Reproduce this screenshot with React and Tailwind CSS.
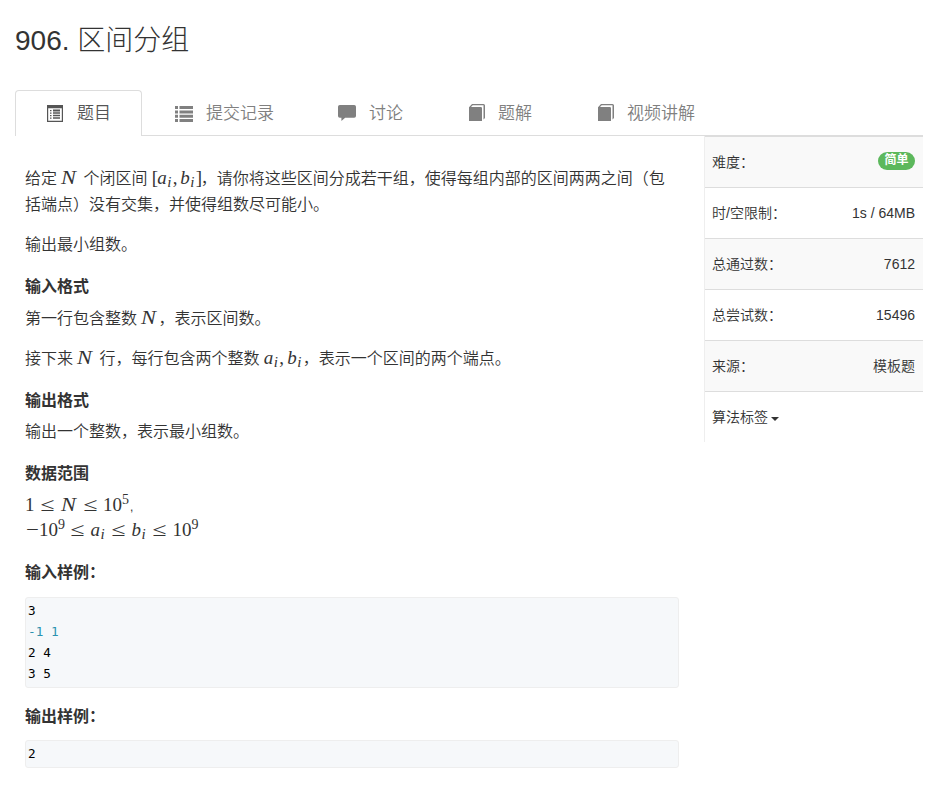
import React from 'react';

const ListAltIcon = () => (
  <svg className="-mt-px" width="16" height="17" viewBox="0 0 16 17" fill="currentColor">
    <path fillRule="evenodd" d="M0 0h16v17H0zM1.200 3.200v12.600h13.600V3.200z" />
    <path d="M3 5h1.500v1.200H3zM6 4.500h7v2H6zM3 7.600h1.500v1.200H3zM6 7.300h7v1.500H6zM3 10h1.500v1.200H3zM6 9.800h7v1.500H6zM3 12.600h1.500v1.200H3zM6 12.300h7v1.500H6z" />
  </svg>
);

const ListIcon = () => (
  <svg className="mt-[3px]" width="18" height="16" viewBox="0 0 18 16" fill="currentColor">
    <path d="M0 0h3v3H0zM4.5 0H18v3H4.5zM0 4.4h3v3H0zM4.5 4.4H18v3H4.5zM0 8.7h3v3H0zM4.5 8.7H18v3H4.5zM0 13h3v3H0zM4.5 13H18v3H4.5z" />
  </svg>
);

const CommentIcon = () => (
  <svg className="mt-px" width="18" height="16" viewBox="0 0 18 16" fill="currentColor">
    <path d="M1.8 0h14.4Q18 0 18 1.8v9.1q0 1.8-1.8 1.8H7.2L3.4 16v-3.3H1.8Q0 12.700 0 10.900V1.800Q0 0 1.800 0z" />
  </svg>
);

const BookIcon = () => (
  <svg width="16" height="17" viewBox="0 0 16 17" fill="currentColor">
    <path d="M0 3.200L3 0h11.500Q16 0 16 1.500V14l-1.500 1.500V1.300H3.700L2 3h9.800q1.200 0 1.200 1.200V17H0z" />
  </svg>
);

const tabs = [
  { label: '提交记录', Icon: ListIcon, pad: 'pl-[33px]', gap: 'gap-[13px]', width: 'w-[163px]' },
  { label: '讨论', Icon: CommentIcon, pad: 'pl-[33px]', gap: 'gap-[13px]', width: 'w-[130px]' },
  { label: '题解', Icon: BookIcon, pad: 'pl-[34px]', gap: 'gap-[13px]', width: 'w-[129px]' },
  { label: '视频讲解', Icon: BookIcon, pad: 'pl-[34px]', gap: 'gap-[13px]', width: 'w-[163px]' },
];

const info = [
  { label: '时/空限制：', value: '1s / 64MB' },
  { label: '总通过数：', value: '7612' },
  { label: '总尝试数：', value: '15496' },
  { label: '来源：', value: '模板题' },
];

const Math = ({ children, className = '' }) => (
  <span className={`inline-block whitespace-nowrap font-['Liberation_Serif',serif] text-[19px] leading-none font-normal ${className}`}>
    {children}
  </span>
);

const VarN = () => (
  <span className="inline-block w-[17px]"><i className="inline-block origin-left scale-x-[1.18]">N</i></span>
);

const Indexed = ({ name }) => (
  <span className="inline-block w-[15.5px]">
    <i>{name}</i>
    <i className="ml-[0.5px] inline-block align-[-3px] text-[15px] leading-none">i</i>
  </span>
);

const Le = () => (
  <span className="inline-block w-[25.5px] pr-px text-center"><span className="inline-block scale-x-[1.35]">≤</span></span>
);

const Power = ({ children }) => (
  <>10<span className="inline-block align-[7px] text-[14px] leading-none">{children}</span></>
);

const Heading = ({ children }) => (
  <h4 className="mt-[15px] h-[26px] pt-px text-base leading-[26px] font-bold">{children}</h4>
);

const Sample = ({ children, className }) => (
  <pre className={`rounded-[3px] border border-[#eeeeee] bg-[#f6f8fa] px-[2px] pt-[2px] pb-[3px] font-['DejaVu_Sans_Mono',monospace] text-[12.7px] leading-[21px] font-normal text-black ${className}`}>
    {children}
  </pre>
);

const App = () => {
  return (
    <div className="min-h-[789px] bg-white pr-[13px] pl-[15px] font-['Liberation_Sans','Noto_Sans_CJK_SC',sans-serif] font-[350] text-[#333333]">
      <h1 className="pt-[21px] text-[28px] leading-10 font-light">906. 区间分组</h1>

      <div className="mt-[29px] flex h-[46px] border-b border-[#dddddd] text-[17px]">
        <div className="flex h-[46px] w-[127px] items-center gap-[14px] rounded-t border border-b-0 border-[#dddddd] bg-white pl-[31px] text-[#555555]">
          <ListAltIcon />
          <span>题目</span>
        </div>
        {tabs.map(({ label, Icon, pad, gap, width }) => (
          <div key={label} className={`flex items-center text-[#808080] ${pad} ${gap} ${width}`}>
            <Icon />
            <span className="pt-[2px]">{label}</span>
          </div>
        ))}
      </div>

      <div className="flex">
        <div className="w-[664px] pt-[30px] pl-[10px] text-base leading-[26px]">
          <p>
            给定 <Math className="w-[17.500px]"><VarN /></Math> 个闭区间{' '}
            <Math className="w-[49px]">
              <span className="inline-block w-[5.500px]">[</span>
              <Indexed name="a" />
              <span className="inline-block w-[7.500px]">,</span>
              <Indexed name="b" />
              <span>]</span>
            </Math>
            ，请你将这些区间分成若干组，使得每组内部的区间两两之间（包括端点）没有交集，并使得组数尽可能小。
          </p>
          <p className="mt-[14px]">输出最小组数。</p>

          <Heading>输入格式</Heading>
          <p className="mt-[7px]">
            第一行包含整数 <Math className="w-[17px]"><VarN /></Math>，表示区间数。
          </p>
          <p className="mt-[14px]">
            接下来 <Math className="w-[17.500px]"><VarN /></Math> 行，每行包含两个整数{' '}
            <Math className="w-[39px]">
              <Indexed name="a" />
              <span className="inline-block w-[8px]">,</span>
              <Indexed name="b" />
            </Math>
            ，表示一个区间的两个端点。
          </p>

          <Heading>输出格式</Heading>
          <p className="mt-[6px]">输出一个整数，表示最小组数。</p>

          <Heading>数据范围</Heading>
          <p className="mt-[6px] h-[26px] pt-px">
            <Math><span className="inline-block w-[10px]">1</span><Le /><VarN /><Le /><Power>5</Power></Math>
            <span className="ml-px text-xs">,</span>
          </p>
          <p className="h-[26px]">
            <Math>
              <span className="inline-block w-[14px] pl-px"><span className="inline-block origin-left scale-x-[1.2]">−</span></span>
              <Power>9</Power><Le /><Indexed name="a" /><Le /><Indexed name="b" /><Le /><Power>9</Power>
            </Math>
          </p>

          <Heading>输入样例：</Heading>
          <Sample className="mt-[12px]">
            {'3\n'}
            <span className="text-[#2b91af]">-1 1</span>
            {'\n2 4\n3 5'}
          </Sample>

          <Heading>输出样例：</Heading>
          <Sample className="mt-[11px]">2</Sample>
        </div>

        <div className="ml-[25px] h-[306px] flex-1 border-l border-[#eeeeee] text-sm">
          <div className="flex h-[51px] items-center justify-between border-t border-[#dddddd] bg-[#f9f9f9] pr-2 pl-[7px]">
            <span>难度：</span>
            <span className="mb-[2px] h-[18px] rounded-full bg-[#5cb85c] px-[6.5px] text-xs leading-4 font-bold text-white">简单</span>
          </div>
          {info.map(({ label, value }) => (
            <div key={label} className="flex h-[51px] items-center justify-between border-t border-[#dddddd] pr-2 pl-[7px] even:bg-white odd:bg-[#f9f9f9]">
              <span>{label}</span>
              <span>{value}</span>
            </div>
          ))}
          <div className="flex h-[51px] items-center border-t border-[#dddddd] pr-2 pl-[7px]">
            <span>算法标签</span>
            <span className="mt-[3px] ml-[3px] border-x-4 border-t-4 border-x-transparent border-t-[#333333]" />
          </div>
        </div>
      </div>
    </div>
  );
};

export default App;
